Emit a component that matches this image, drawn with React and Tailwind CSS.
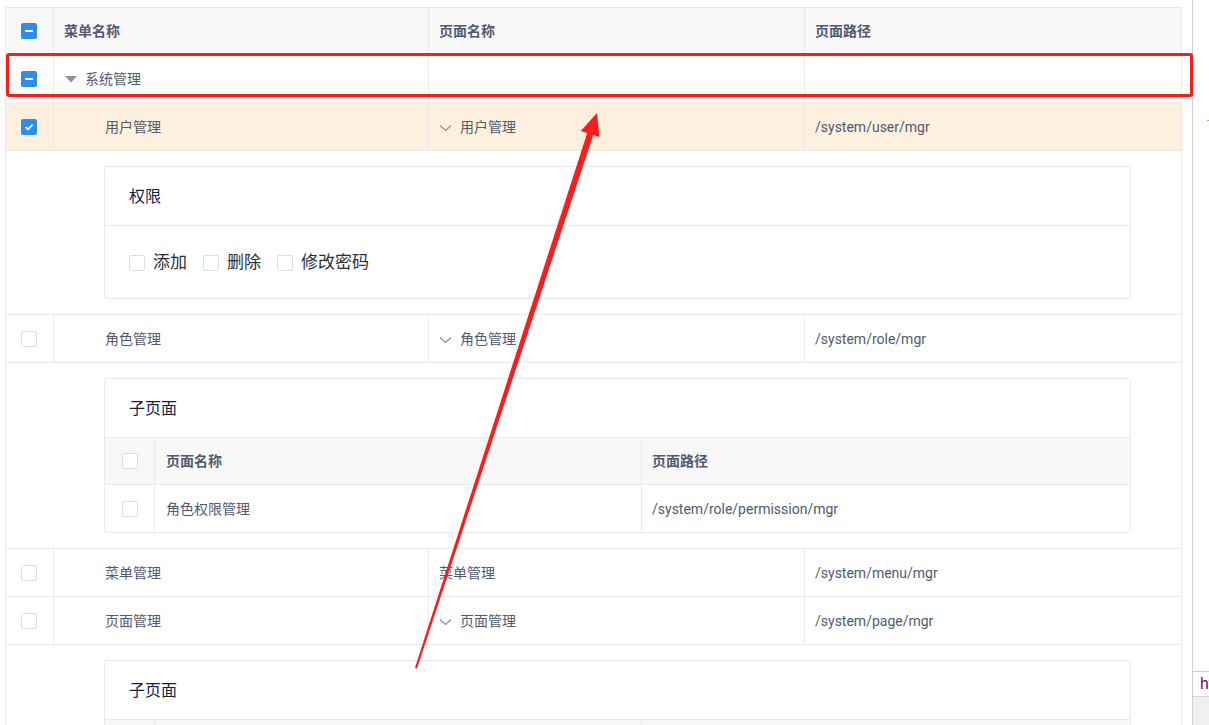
import React from "react";

const rows = [
  { key: "sys", name: "系统管理", parent: true, check: "half" },
  {
    key: "user",
    name: "用户管理",
    page: "用户管理",
    path: "/system/user/mgr",
    check: "on",
    active: true,
    chevron: true,
    expand: { kind: "perms", title: "权限", items: ["添加", "删除", "修改密码"] },
  },
  {
    key: "role",
    name: "角色管理",
    page: "角色管理",
    path: "/system/role/mgr",
    chevron: true,
    expand: {
      kind: "pages",
      title: "子页面",
      rows: [{ name: "角色权限管理", path: "/system/role/permission/mgr" }],
    },
  },
  { key: "menu", name: "菜单管理", page: "菜单管理", path: "/system/menu/mgr" },
  {
    key: "page",
    name: "页面管理",
    page: "页面管理",
    path: "/system/page/mgr",
    chevron: true,
    expand: {
      kind: "pages",
      title: "子页面",
      rows: [{ name: "页面详情", path: "/system/page/detail" }],
    },
  },
];

function Checkbox({ state }) {
  if (state === "half")
    return (
      <span className="flex h-4 w-4 items-center justify-center rounded-[2px] bg-[#2d8cf0]">
        <span className="h-[2px] w-2 bg-white" />
      </span>
    );
  if (state === "on")
    return (
      <span className="flex h-4 w-4 items-center justify-center rounded-[2px] bg-[#2d8cf0]">
        <svg width="10" height="8" viewBox="0 0 10 8">
          <path d="M1.5 4 L4 6.3 L8.6 1.6" fill="none" stroke="#fff" strokeWidth="1.8" />
        </svg>
      </span>
    );
  return <span className="block h-4 w-4 rounded-[2px] border border-[#dcdee2] bg-white" />;
}

function Chevron() {
  return (
    <svg width="13" height="8" viewBox="0 0 13 8" className="mr-[8px]">
      <path d="M1 1.5 L6.5 6.5 L12 1.5" fill="none" stroke="#8a8e99" strokeWidth="1.2" />
    </svg>
  );
}

function Caret() {
  return (
    <svg width="12" height="7" viewBox="0 0 12 7" className="ml-[1px] mr-[8px]">
      <path d="M0 0 H12 L6 6.5 Z" fill="#909399" />
    </svg>
  );
}

function Row({ row }) {
  return (
    <div
      className={`grid h-[48px] grid-cols-[48px_375px_376px_376px] border-b border-[#e8eaec] text-[14px] text-[#515a6e] ${
        row.active ? "bg-[#fdf0de]" : "bg-white"
      }`}
    >
      <div className="flex items-center justify-center border-r border-[#e8eaec] pr-[2px]">
        <Checkbox state={row.check} />
      </div>
      <div className="flex items-center border-r border-[#e8eaec] pl-[10px] pt-[2px]">
        {row.parent ? (
          <>
            <Caret />
            <span>{row.name}</span>
          </>
        ) : (
          <span className="pl-[41px]">{row.name}</span>
        )}
      </div>
      <div className="flex items-center border-r border-[#e8eaec] pl-[10px] pt-[2px]">
        {row.chevron && <Chevron />}
        {row.page}
      </div>
      <div className="flex items-center pl-[10px] pt-[2px]">{row.path}</div>
    </div>
  );
}

function ExpandCard({ data }) {
  return (
    <div className="border-b border-[#e8eaec] bg-white py-[15px] pl-[98px] pr-[50px]">
      <div className="rounded-[3px] border border-[#e8eaec] bg-white">
        <div className="flex h-[59px] items-center border-b border-[#e8eaec] pl-[24px] pt-[2px] text-[16px] text-[#17233d]">
          {data.title}
        </div>
        {data.kind === "perms" ? (
          <div className="flex h-[72px] items-center gap-4 pl-[24px] pt-[2px] text-[17px] text-[#2b2f3a]">
            {data.items.map((item) => (
              <label key={item} className="flex items-center gap-2">
                <Checkbox />
                <span>{item}</span>
              </label>
            ))}
          </div>
        ) : (
          <div className="text-[14px] text-[#515a6e]">
            <div className="grid h-[47px] grid-cols-[50px_487px_1fr] border-b border-[#e8eaec] bg-[#f8f8f9] font-bold">
              <div className="flex items-center justify-center border-r border-[#e8eaec]">
                <Checkbox />
              </div>
              <div className="flex items-center border-r border-[#e8eaec] pl-[11px] pt-[1px]">页面名称</div>
              <div className="flex items-center pl-[10px] pt-[1px]">页面路径</div>
            </div>
            {data.rows.map((r) => (
              <div key={r.name} className="grid h-[47px] grid-cols-[50px_487px_1fr]">
                <div className="flex items-center justify-center border-r border-[#e8eaec]">
                  <Checkbox />
                </div>
                <div className="flex items-center border-r border-[#e8eaec] pl-[11px] pt-[1px]">{r.name}</div>
                <div className="flex items-center pl-[10px] pt-[1px]">{r.path}</div>
              </div>
            ))}
          </div>
        )}
      </div>
    </div>
  );
}

export default function App() {
  return (
    <div className="relative flex h-[725px] w-[1209px] overflow-hidden bg-white font-['Roboto','Noto_Sans_CJK_SC',sans-serif]">
      {/* menu table */}
      <div className="w-[1192px] shrink-0 pl-[5px] pt-[7px]">
        <div className="w-[1177px] border-x border-t border-[#e8eaec]">
          <div className="grid h-[47px] grid-cols-[48px_375px_376px_376px] border-b border-[#e8eaec] bg-[#f8f8f9] text-[14px] font-bold text-[#515a6e]">
            <div className="flex items-center justify-center border-r border-[#e8eaec] pr-[2px]">
              <Checkbox state="half" />
            </div>
            <div className="flex items-center border-r border-[#e8eaec] pl-[10px]">菜单名称</div>
            <div className="flex items-center border-r border-[#e8eaec] pl-[10px]">页面名称</div>
            <div className="flex items-center pl-[10px]">页面路径</div>
          </div>
          {rows.map((row) => (
            <React.Fragment key={row.key}>
              <Row row={row} />
              {row.expand && <ExpandCard data={row.expand} />}
            </React.Fragment>
          ))}
        </div>
      </div>

      {/* neighbouring window, cut off */}
      <div className="flex flex-1 flex-col border-l border-[#cdd0d6]">
        <div className="relative h-[672px] border-b border-[#cdd0d6]">
          <span className="absolute left-[14px] top-[120px] h-[1px] w-[2px] bg-[#e0a050]" />
        </div>
        <div className="flex h-[24px] items-center pl-[7px] text-[16px] text-[#800080]">ht</div>
        <div className="flex-1 border-t border-[#d6d6d6] bg-[#f0f0f0]" />
      </div>

      {/* annotation */}
      <div className="pointer-events-none absolute left-[6px] top-[53px] h-[44px] w-[1187px] rounded-[3px] border-[3px] border-[#fb1c1c]" />
      <svg className="pointer-events-none absolute left-0 top-0" width="1209" height="725" viewBox="0 0 1209 725">
        <polygon
          points="597,113 599.5,137 593.3,134.9 417,668.5 415,667.7 587.2,132.9 580.8,131"
          fill="#fb1c1c"
        />
      </svg>
    </div>
  );
}
